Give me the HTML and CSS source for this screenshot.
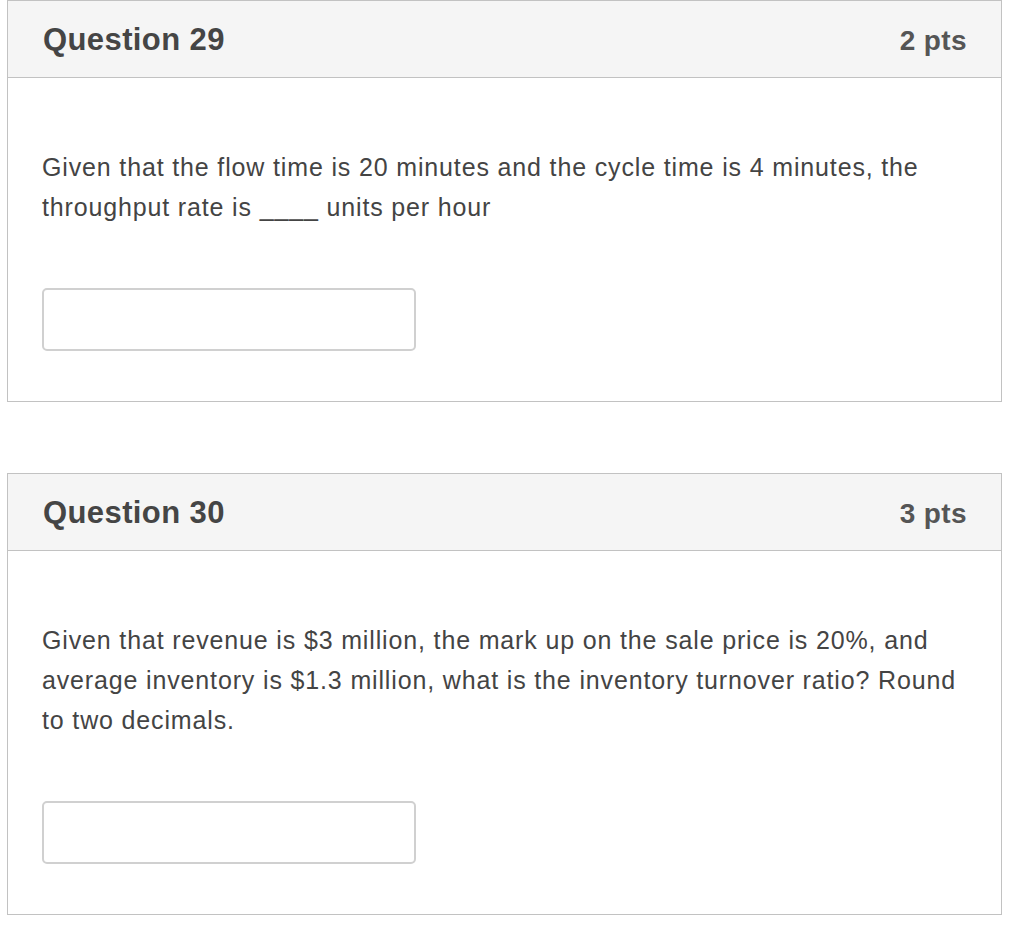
FILE: index.html
```html
<!DOCTYPE html>
<html>
<head>
<meta charset="utf-8">
<link rel="stylesheet" href="styles.css">
</head>
<body>
<div class="page">
  <div class="card">
    <div class="card-header">
      <span class="title">Question 29</span>
      <span class="pts">2 pts</span>
    </div>
    <div class="card-body">
      <p class="text">Given that the flow time is 20 minutes and the cycle time is 4 minutes, the throughput rate is ____ units per hour</p>
      <input class="answer" type="text">
    </div>
  </div>
  <div class="card">
    <div class="card-header">
      <span class="title">Question 30</span>
      <span class="pts">3 pts</span>
    </div>
    <div class="card-body">
      <p class="text">Given that revenue is $3 million, the mark up on the sale price is 20%, and average inventory is $1.3 million, what is the inventory turnover ratio? Round to two decimals.</p>
      <input class="answer" type="text">
    </div>
  </div>
</div>
</body>
</html>
```

FILE: styles.css
```css
html, body {
  margin: 0;
  padding: 0;
  background: #ffffff;
}
.page {
  padding: 0 22px 0 7px;
  font-family: "Liberation Sans", Arial, sans-serif;
  color: #444444;
  display: flex;
  flex-direction: column;
  gap: 71px;
}
.card {
  border: 1px solid #c2c2c2;
}
.card-header {
  height: 76px;
  background: #f5f5f5;
  border-bottom: 1px solid #c2c2c2;
  display: flex;
  align-items: center;
  justify-content: space-between;
  padding: 0 34px 0 35px;
}
.title {
  font-size: 31px;
  font-weight: bold;
  letter-spacing: 0.4px;
  color: #454545;
  position: relative;
  top: 1px;
}
.pts {
  font-size: 28px;
  font-weight: bold;
  letter-spacing: 0.4px;
  color: #555555;
  position: relative;
  top: 2px;
}
.card-body {
  padding: 69px 34px 50px 34px;
}
.text {
  margin: 0 0 61px 0;
  font-size: 25px;
  letter-spacing: 0.85px;
  line-height: 40px;
  color: #444444;
}
.answer {
  display: block;
  box-sizing: border-box;
  width: 374px;
  height: 63px;
  border: 2px solid #d0d0d0;
  border-radius: 5px;
  background: #ffffff;
  margin: 0;
  padding: 0;
}
```
